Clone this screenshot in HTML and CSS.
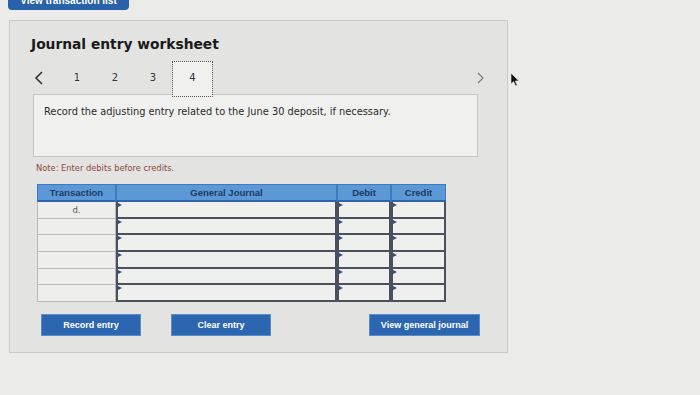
FILE: index.html
```html
<!DOCTYPE html>
<html>
<head>
<meta charset="utf-8">
<link rel="stylesheet" href="styles.css">
</head>
<body>
<div class="topbtn"><span>View transaction list</span></div>
<div class="panel">
  <h1 class="title">Journal entry worksheet</h1>
  <div class="nav">
    <span class="arrow left"><svg width="10" height="14" viewBox="0 0 10 14"><polyline points="8,1 2,7 8,13" fill="none" stroke="#333" stroke-width="1.6"/></svg></span>
    <span class="tab">1</span>
    <span class="tab">2</span>
    <span class="tab">3</span>
    <span class="tab active">4</span>
    <span class="arrow right"><svg width="8" height="12" viewBox="0 0 8 12"><polyline points="1,1 6,6 1,11" fill="none" stroke="#777" stroke-width="1.1"/></svg></span>
  </div>
  <div class="instr">Record the adjusting entry related to the June 30 deposit, if necessary.</div>
  <div class="note">Note: Enter debits before credits.</div>
  <div class="journal">
    <div class="hd">Transaction</div>
    <div class="hd">General Journal</div>
    <div class="hd">Debit</div>
    <div class="hd">Credit</div>

    <div class="tx">d.</div><div class="in"></div><div class="in"></div><div class="in"></div>
    <div class="tx"></div><div class="in"></div><div class="in"></div><div class="in"></div>
    <div class="tx"></div><div class="in"></div><div class="in"></div><div class="in"></div>
    <div class="tx"></div><div class="in"></div><div class="in"></div><div class="in"></div>
    <div class="tx"></div><div class="in"></div><div class="in"></div><div class="in"></div>
    <div class="tx"></div><div class="in"></div><div class="in"></div><div class="in"></div>
  </div>
  <div class="actions">
    <button class="btn record">Record entry</button>
    <button class="btn clear">Clear entry</button>
    <button class="btn view">View general journal</button>
  </div>
</div>
<svg class="cursor" width="10" height="15" viewBox="0 0 10 15"><path d="M1 1 L1 12 L3.6 9.6 L5.6 14 L7.2 13.3 L5.3 9 L8.8 9 Z" fill="#111" stroke="#eee" stroke-width="0.6"/></svg>
</body>
</html>
```
FILE: styles.css
```css
html, body {
  margin: 0;
  padding: 0;
}
body {
  width: 700px;
  height: 395px;
  overflow: hidden;
  background: #ebebe9;
  font-family: "DejaVu Sans", Verdana, sans-serif;
  position: relative;
}
.topbtn {
  margin-left: 8px;
  width: 121px;
  height: 10px;
  background: #2a62a9;
  border-radius: 0 0 4px 4px;
  overflow: hidden;
  text-align: center;
}
.topbtn span {
  display: block;
  margin-top: -5px;
  color: #fff;
  font: bold 10px/12px "Liberation Sans", Arial, sans-serif;
}
.panel {
  margin: 10px 0 0 9px;
  width: 499px;
  height: 333px;
  box-sizing: border-box;
  background: #e3e3e2;
  border: 1px solid #c9c9c8;
  padding: 13px 21px 0 23px;
}
.title {
  margin: 0 0 0 -2px;
  font-size: 13.8px;
  line-height: 20px;
  font-weight: bold;
  color: #1a1a1a;
}
.nav {
  margin-top: 7px;
  height: 33px;
  display: flex;
  align-items: stretch;
}
.arrow {
  display: flex;
  align-items: center;
}
.arrow.left {
  width: 25px;
  padding-left: 1px;
  box-sizing: border-box;
}
.arrow.right {
  margin-left: auto;
  padding-right: 1px;
}
.tab {
  width: 38px;
  display: flex;
  align-items: center;
  justify-content: center;
  font-size: 10px;
  color: #333;
}
.tab.active {
  width: 41px;
  height: 36px;
  box-sizing: border-box;
  border: 1.5px dotted #555;
  background: #f0f0ef;
  padding-bottom: 3px;
  position: relative;
  z-index: 1;
}
.instr {
  width: 445px;
  height: 63px;
  box-sizing: border-box;
  background: #f0f0ef;
  border: 1px solid #c6c6c5;
  padding: 10px 10px 0 10px;
  font-size: 9.8px;
  line-height: 14px;
  color: #2a2a2a;
}
.note {
  margin: 5px 0 0 3px;
  font-size: 8.3px;
  line-height: 12px;
  color: #8b4a3e;
}
.journal {
  margin: 10px 0 0 4px;
  width: 409px;
  height: 118px;
  display: grid;
  grid-template-columns: 79px 221px 54px 55px;
  grid-template-rows: 18px repeat(6, 1fr);
}
.hd {
  background: #5d98d6;
  border: 1px solid #3f79be;
  border-bottom: 2px solid #2f64a8;
  display: flex;
  align-items: center;
  justify-content: center;
  font: bold 9.5px "Liberation Sans", Arial, sans-serif;
  color: #1b3a66;
}
.tx {
  background: #eeeeec;
  border: 1px solid #b9b9b8;
  border-top: none;
  display: flex;
  align-items: center;
  justify-content: center;
  font-size: 8.5px;
  color: #555;
}
.in {
  background: #efefed;
  border: 2px solid #4a505d;
  border-top: none;
  position: relative;
}
.in::before {
  content: "";
  position: absolute;
  left: 0;
  top: 1px;
  border-left: 4px solid #2c4f82;
  border-top: 2px solid transparent;
  border-bottom: 2px solid transparent;
}
.actions {
  margin-top: 12px;
  display: flex;
}
.btn {
  height: 22px;
  border: 1px solid #5a8cc9;
  background: #2d66b0;
  color: #fff;
  font: bold 9px "Liberation Sans", Arial, sans-serif;
  padding: 0;
}
.btn.record {
  width: 100px;
  margin-left: 8px;
}
.btn.clear {
  width: 100px;
  margin-left: 30px;
}
.btn.view {
  width: 111px;
  margin-left: 98px;
}
.cursor {
  position: absolute;
  left: 510px;
  top: 72px;
}
```
